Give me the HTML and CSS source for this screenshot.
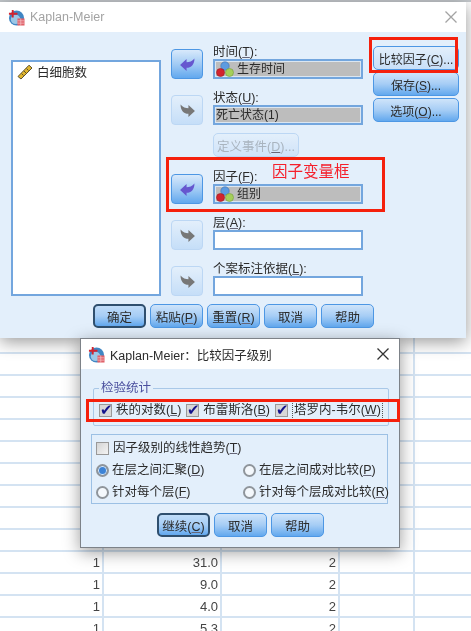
FILE: index.html
```html
<!DOCTYPE html>
<html>

<head>
  <title>Kaplan-Meier</title>
  <link rel="stylesheet" href="styles.css">
</head>

<body>
  <svg class="defs" width="0" height="0">
    <symbol id="app" viewBox="0 0 18 18">
      <circle cx="9" cy="9.500" r="8" fill="#3f86c4" />
      <circle cx="8" cy="11" r="5" fill="#9cc7e6" />
      <path d="M1 5h9M5 1v8" stroke="#d3232e" stroke-width="2" fill="none" />
      <rect x="10" y="10" width="7.500" height="7.500" fill="#e0626a" />
      <path d="M10 12.500h7.500M10 15h7.500M13.500 10v7.500" stroke="#f6c9cc" stroke-width=".7" />
    </symbol>
    <symbol id="balls" viewBox="0 0 18 16">
      <circle cx="9" cy="5" r="4.200" fill="#5d9be0" stroke="#3b6fb0" stroke-width=".6" />
      <circle cx="4.500" cy="11.500" r="4" fill="#d3232e" stroke="#9e1a22" stroke-width=".6" />
      <circle cx="13.500" cy="11.500" r="4" fill="#a5cf5a" stroke="#76a03a" stroke-width=".6" />
    </symbol>
    <symbol id="ruler" viewBox="0 0 16 16">
      <path d="M1 12.500 12 1.200 15 4 4 15z" fill="#e0b52c" stroke="#5e5230" stroke-width="1" />
      <path d="M4.500 9.500l2 2M7 7l2 2M9.500 4.500l2 2" stroke="#5e5230" stroke-width="1" />
    </symbol>
    <symbol id="arrow-left" viewBox="0 0 16 14">
      <path d="M0 7.500 7 1V4.500C10 4.500 13 3.500 15.500 .5 15.500 7 12 10.500 7 10.500V14z" fill="#6657cf" />
    </symbol>
    <symbol id="arrow-right" viewBox="0 0 16 14">
      <path d="M16 7.500 9 1V4.500C6 4.500 3 3.500 .5 .5 .5 7 4 10.500 9 10.500V14z" fill="#777" />
    </symbol>
    <symbol id="cross" viewBox="0 0 14 14">
      <path d="M1.500 1.500 12.500 12.500M12.500 1.500 1.500 12.500" stroke="currentColor" stroke-width="1.300" fill="none" />
    </symbol>
  </svg>

  <div class="sheet">
    <div class="sheet-row"><span></span><span></span><span></span><span></span><span></span></div>
    <div class="sheet-row"><span></span><span></span><span></span><span></span><span></span></div>
    <div class="sheet-row"><span></span><span></span><span></span><span></span><span></span></div>
    <div class="sheet-row"><span></span><span></span><span></span><span></span><span></span></div>
    <div class="sheet-row"><span></span><span></span><span></span><span></span><span></span></div>
    <div class="sheet-row"><span></span><span></span><span></span><span></span><span></span></div>
    <div class="sheet-row"><span></span><span></span><span></span><span></span><span></span></div>
    <div class="sheet-row"><span></span><span></span><span></span><span></span><span></span></div>
    <div class="sheet-row"><span></span><span></span><span></span><span></span><span></span></div>
    <div class="sheet-row"><span></span><span></span><span></span><span></span><span></span></div>
    <div class="sheet-row"><span>1</span><span>31.0</span><span>2</span><span></span><span></span></div>
    <div class="sheet-row"><span>1</span><span>9.0</span><span>2</span><span></span><span></span></div>
    <div class="sheet-row"><span>1</span><span>4.0</span><span>2</span><span></span><span></span></div>
    <div class="sheet-row"><span>1</span><span>5.3</span><span>2</span><span></span><span></span></div>
  </div>

  <div class="window main-window">
    <div class="titlebar">
      <svg class="app-icon"><use href="#app" /></svg>
      <span class="title faded">Kaplan-Meier</span>
      <svg class="close faded"><use href="#cross" /></svg>
    </div>
    <div class="main-body">
      <div class="var-list">
        <div class="var-item">
          <svg class="ruler"><use href="#ruler" /></svg>白细胞数
        </div>
      </div>

      <div class="slots">
        <div class="slot">
          <button class="arrow"><svg><use href="#arrow-left" /></svg></button>
          <div class="slot-field">
            <div class="slot-label">时间(<u>T</u>):</div>
            <div class="field filled"><svg class="balls"><use href="#balls" /></svg>生存时间</div>
          </div>
        </div>
        <div class="slot">
          <button class="arrow off"><svg><use href="#arrow-right" /></svg></button>
          <div class="slot-field">
            <div class="slot-label">状态(<u>U</u>):</div>
            <div class="field filled">死亡状态(1)</div>
          </div>
        </div>
        <button class="btn off define">定义事件(<u>D</u>)...</button>
        <div class="slot factor">
          <button class="arrow"><svg><use href="#arrow-left" /></svg></button>
          <div class="slot-field">
            <div class="slot-label">因子(<u>F</u>):</div>
            <div class="field filled"><svg class="balls"><use href="#balls" /></svg>组别</div>
          </div>
        </div>
        <div class="slot">
          <button class="arrow off"><svg><use href="#arrow-right" /></svg></button>
          <div class="slot-field">
            <div class="slot-label">层(<u>A</u>):</div>
            <div class="field"></div>
          </div>
        </div>
        <div class="slot">
          <button class="arrow off"><svg><use href="#arrow-right" /></svg></button>
          <div class="slot-field">
            <div class="slot-label">个案标注依据(<u>L</u>):</div>
            <div class="field"></div>
          </div>
        </div>
      </div>

      <div class="side-buttons">
        <button class="btn pale">比较因子(<u>C</u>)...</button>
        <button class="btn">保存(<u>S</u>)...</button>
        <button class="btn">选项(<u>O</u>)...</button>
      </div>
    </div>
    <div class="actions main-actions">
      <button class="btn default">确定</button>
      <button class="btn">粘贴(<u>P</u>)</button>
      <button class="btn">重置(<u>R</u>)</button>
      <button class="btn">取消</button>
      <button class="btn">帮助</button>
    </div>

    <div class="mark mark-compare"></div>
    <div class="mark mark-factor"></div>
    <div class="note">因子变量框</div>
  </div>

  <div class="window sub-window">
    <div class="titlebar">
      <svg class="app-icon"><use href="#app" /></svg>
      <span class="title">Kaplan-Meier：比较因子级别</span>
      <svg class="close"><use href="#cross" /></svg>
    </div>
    <div class="sub-body">
      <fieldset class="tests">
        <legend>检验统计</legend>
        <label class="check on">秩的对数(<u>L</u>)</label>
        <label class="check on">布雷斯洛(<u>B</u>)</label>
        <label class="check on"><span class="focus">塔罗内-韦尔(<u>W</u>)</span></label>
      </fieldset>
      <div class="levels">
        <label class="check">因子级别的线性趋势(<u>T</u>)</label>
        <div class="radios">
          <label class="radio on">在层之间汇聚(<u>D</u>)</label>
          <label class="radio">在层之间成对比较(<u>P</u>)</label>
          <label class="radio">针对每个层(<u>F</u>)</label>
          <label class="radio">针对每个层成对比较(<u>R</u>)</label>
        </div>
      </div>
      <div class="actions sub-actions">
        <button class="btn default">继续(<u>C</u>)</button>
        <button class="btn">取消</button>
        <button class="btn">帮助</button>
      </div>
    </div>
    <div class="mark mark-tests"></div>
  </div>
</body>

</html>
```

FILE: styles.css
```css
*,
*::before {
  box-sizing: border-box;
}

body {
  margin: 0;
  height: 631px;
  overflow: hidden;
  position: relative;
  background: #fff;
  color: #2b2b2b;
  font-family: "Liberation Sans", "Noto Sans CJK SC", sans-serif;
  font-size: 12px;
  filter: blur(0.45px);
}

.defs {
  position: absolute;
}

u {
  text-underline-offset: 1px;
  text-decoration-color: #667;
}

/* spreadsheet behind the dialogs */
.sheet {
  padding-top: 330px;
  border-top: 2px solid #c4c8cc;
}

.sheet-row {
  display: grid;
  grid-template-columns: 104px 118px 118px 75px 56px;
  height: 22px;
  border-bottom: 2px solid #d4e3f2;
  font-size: 13px;
  line-height: 22px;
  color: #444;
}

.sheet-row span {
  border-right: 2px solid #d4e3f2;
  padding-right: 2px;
  text-align: right;
}

.sheet-row span:last-child {
  border-right: none;
}

/* dialogs */
.window {
  position: absolute;
  background: #e3effb;
  box-shadow: 0 4px 16px rgba(0, 0, 0, 0.4);
}

.main-window {
  left: 0;
  top: 2px;
  width: 466px;
  height: 336px;
}

.sub-window {
  left: 80px;
  top: 338px;
  width: 320px;
  height: 210px;
  border: 1px solid #7d8288;
}

.titlebar {
  height: 30px;
  background: #fff;
  display: flex;
  align-items: center;
  padding: 0 8px;
  font-size: 12.500px;
}

.sub-window .titlebar {
  padding: 0 9px 0 7px;
}

.app-icon {
  width: 17px;
  height: 17px;
  margin-right: 5px;
}

.title {
  flex-grow: 1;
}

.close {
  width: 14px;
  height: 14px;
  color: #333;
}

.faded {
  color: #a3a3a3;
}

.main-body {
  display: flex;
  height: 272px;
  padding: 13px 0 0 11px;
}

.var-list {
  width: 150px;
  height: 236px;
  margin-top: 15px;
  background: #fff;
  border: 2px solid #73a6de;
}

.var-item {
  display: flex;
  align-items: center;
  height: 19px;
  padding-left: 4px;
  font-size: 12.500px;
}

.ruler {
  width: 16px;
  height: 16px;
  margin-right: 4px;
}

.slots {
  width: 192px;
  margin-left: 10px;
}

.slot {
  display: flex;
  align-items: flex-end;
  gap: 10px;
  margin-bottom: 12px;
}

.factor {
  margin-top: 13px;
}

.slot-field {
  width: 150px;
}

.slot-label {
  height: 14px;
  line-height: 15px;
  font-size: 12.500px;
  white-space: nowrap;
}

.field {
  display: flex;
  align-items: center;
  height: 20px;
  background: #fff;
  border: 2px solid #73a6de;
  font-size: 12px;
  line-height: 16px;
  white-space: nowrap;
}

.filled {
  background: #bdbdbd;
  box-shadow: inset 0 0 0 1px #dbe6f1;
  padding-left: 1px;
}

.balls {
  width: 18px;
  height: 16px;
  margin-right: 3px;
}

.arrow {
  width: 32px;
  height: 30px;
  padding: 0;
  display: flex;
  align-items: center;
  justify-content: center;
  border: 1px solid #4d97e4;
  border-radius: 4px;
  background: linear-gradient(#d8e9fb, #9cc8f4 55%, #62a8ee);
}

.arrow svg {
  width: 15px;
  height: 13px;
}

.arrow.off {
  border-color: #bcd7f4;
  background: linear-gradient(#e3effb, #c5def8);
}

.btn {
  display: block;
  padding: 0;
  height: 24px;
  border: 1px solid #4d97e4;
  border-radius: 5px;
  background: linear-gradient(#cfe4fa, #a6cdf5 50%, #62a8ee);
  color: #2b2b2b;
  font-family: inherit;
  font-size: 12.500px;
  white-space: nowrap;
}

.btn.pale {
  background: linear-gradient(#e3effb, #c8dff8);
}

.btn.off {
  border-color: #bcd7f4;
  background: linear-gradient(#e3effb, #cfe3f9);
  color: #a9b4bf;
}

.btn.default {
  border: 2px solid #2f4f6e;
  background: linear-gradient(#c0dcf8, #a6cdf5 50%, #62a8ee);
}

.define {
  width: 86px;
  margin: -4px 0 0 42px;
}

.side-buttons {
  width: 86px;
  margin: 1px 0 0 10px;
  display: flex;
  flex-direction: column;
  gap: 2px;
}

.side-buttons .btn {
  font-size: 12px;
}

.actions {
  display: flex;
  gap: 4px;
}

.actions .btn {
  width: 53px;
}

.main-actions {
  padding-left: 93px;
}

.sub-body {
  padding: 9px 11px 0 10px;
}

.tests {
  margin: 4px 2px 0;
  height: 44px;
  padding: 0 0 0 5px;
  border: 1px solid #a9c8e8;
  border-radius: 2px;
  display: flex;
  align-items: center;
}

.tests legend {
  padding: 0 2px;
  color: #4a4f9e;
  line-height: 13px;
  font-size: 12.500px;
}

.tests .check {
  margin-right: 5px;
}

.check,
.radio {
  display: flex;
  align-items: center;
  font-size: 12.500px;
  line-height: 15px;
  white-space: nowrap;
}

.check::before {
  content: "";
  width: 13px;
  height: 13px;
  margin-right: 4px;
  border: 1px solid #999;
  background: linear-gradient(135deg, #d4d4d4, #f4f4f4);
}

.check.on::before {
  content: "✔";
  color: #14148c;
  font-size: 15px;
  line-height: 10px;
  text-align: center;
  background: #d8d8d8;
}

.focus {
  padding: 0 1px;
  border-left: 1px dotted #555;
  border-right: 1px dotted #555;
}

.levels {
  margin-top: 8px;
  height: 70px;
  padding: 6px 4px 0;
  background: #e3effb;
  border: 1px solid #9cc0e4;
}

.radios {
  display: grid;
  grid-template-columns: 147px auto;
  grid-auto-rows: 15px;
  row-gap: 7px;
  margin-top: 7px;
}

.radio::before {
  content: "";
  width: 13px;
  height: 13px;
  margin-right: 3px;
  border-radius: 50%;
  border: 2px solid #8f959b;
  background: #f4f8fc;
}

.radio.on::before {
  background: #3d83d6;
  box-shadow: inset 0 0 0 1px #dcecfb;
}

.sub-actions {
  margin-top: 9px;
  padding-left: 66px;
}

/* red annotation boxes */
.mark {
  position: absolute;
  border: 3px solid #f5200c;
  pointer-events: none;
}

.mark-compare {
  left: 369px;
  top: 35px;
  width: 89px;
  height: 36px;
}

.mark-factor {
  left: 166px;
  top: 155px;
  width: 219px;
  height: 55px;
}

.mark-tests {
  left: 5px;
  top: 60px;
  width: 314px;
  height: 23px;
}

.note {
  position: absolute;
  left: 272px;
  top: 161px;
  color: #f5202c;
  font-size: 15.500px;
  line-height: 18px;
}
```
